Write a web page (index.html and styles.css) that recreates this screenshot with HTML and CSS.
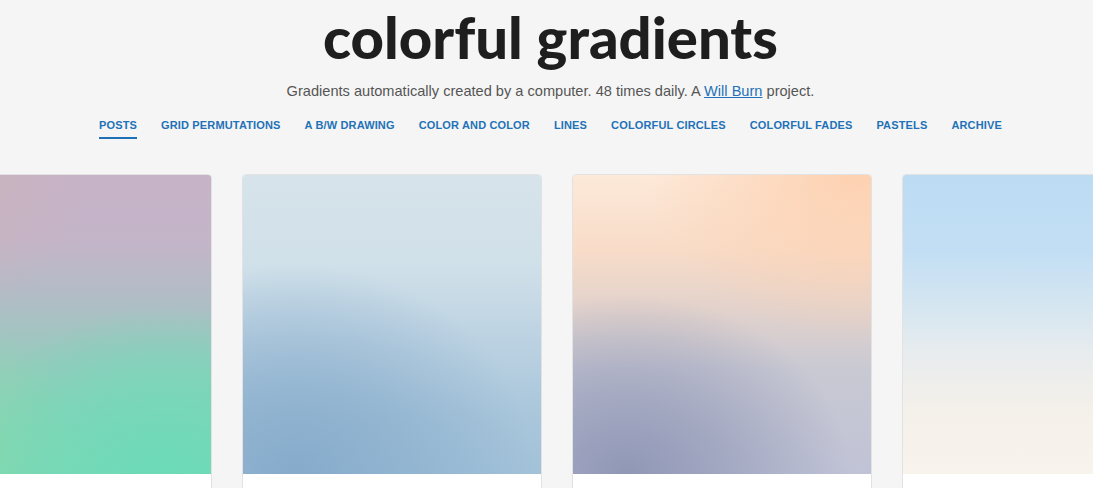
FILE: index.html
```html
<!DOCTYPE html>
<html lang="en">
<head>
<meta charset="utf-8">
<title>colorful gradients</title>
<link rel="stylesheet" href="styles.css">
</head>
<body>
<header class="masthead">
  <h1 class="title">colorful gradients</h1>
  <p class="tagline">Gradients automatically created by a computer. 48 times daily. A <a href="#">Will Burn</a> project.</p>
  <nav class="nav">
    <a class="nav-item active" href="#">POSTS</a>
    <a class="nav-item" href="#">GRID PERMUTATIONS</a>
    <a class="nav-item" href="#">A B/W DRAWING</a>
    <a class="nav-item" href="#">COLOR AND COLOR</a>
    <a class="nav-item" href="#">LINES</a>
    <a class="nav-item" href="#">COLORFUL CIRCLES</a>
    <a class="nav-item" href="#">COLORFUL FADES</a>
    <a class="nav-item" href="#">PASTELS</a>
    <a class="nav-item" href="#">ARCHIVE</a>
  </nav>
</header>
<main class="feed">
  <div class="track">
    <article class="card"><div class="art art-mint"></div><div class="card-body"></div></article>
    <article class="card"><div class="art art-sky"></div><div class="card-body"></div></article>
    <article class="card"><div class="art art-peach"></div><div class="card-body"></div></article>
    <article class="card"><div class="art art-dawn"></div><div class="card-body"></div></article>
  </div>
</main>
</body>
</html>
```
FILE: styles.css
```css
html, body {
  margin: 0;
  padding: 0;
  background: #f5f5f5;
  overflow: hidden;
}
body {
  font-family: "Liberation Sans", Arial, sans-serif;
  color: #222;
}
.masthead {
  display: flex;
  flex-direction: column;
  align-items: center;
  padding-top: 4px;
  padding-left: 8px;
}
.title {
  margin: 0;
  font-family: Lato, "Noto Sans", sans-serif;
  font-weight: 900;
  font-size: 58px;
  line-height: 66px;
  color: #1e1e1e;
  letter-spacing: 0;
}
.tagline {
  margin: 12px 0 0;
  font-size: 14.6px;
  line-height: 18px;
  color: #555;
}
.tagline a {
  color: #1f72b8;
  text-decoration: underline;
}
.nav {
  display: flex;
  gap: 24px;
  margin-top: 14px;
}
.nav-item {
  font-size: 11px;
  font-weight: 700;
  color: #1f72b8;
  text-decoration: none;
  letter-spacing: 0.15px;
  padding: 5px 0 6px;
  border-bottom: 2px solid transparent;
}
.nav-item.active {
  border-bottom-color: #1f72b8;
}
.feed {
  margin-top: 35px;
}
.track {
  display: flex;
  gap: 30px;
  margin-left: -88px;
}
.card {
  box-sizing: border-box;
  flex: 0 0 300px;
  background: #fff;
  border: 1px solid #e2e2e2;
  border-radius: 4px;
  overflow: hidden;
}
.art {
  height: 299px;
}
.card-body {
  height: 40px;
}
.art-mint {
  background:
    radial-gradient(ellipse 90% 70% at 85% 100%, #6ddbb8 0%, rgba(112,218,184,0.6) 45%, rgba(112,218,184,0) 80%),
    radial-gradient(ellipse 70% 60% at 5% 95%, #8ad9a8 0%, rgba(138,217,168,0) 80%),
    radial-gradient(ellipse 60% 50% at 0% 0%, #c9b2b8 0%, rgba(201,178,184,0) 100%),
    linear-gradient(180deg, #c7b3c8 0%, #c4b5c9 22%, #b2bcc6 40%, #9ac8be 60%, #80d6b6 100%);
}
.art-sky {
  background:
    radial-gradient(ellipse 80% 70% at 18% 100%, #86abcb 0%, rgba(134,171,203,0.55) 50%, rgba(134,171,203,0) 100%),
    linear-gradient(180deg, #d6e3eb 0%, #d0e0e9 30%, #bcd2e2 55%, #a9c6db 80%, #a2c2d9 100%);
}
.art-peach {
  background:
    radial-gradient(ellipse 75% 60% at 18% 100%, #9097b6 0%, rgba(144,151,182,0.6) 45%, rgba(144,151,182,0) 100%),
    radial-gradient(ellipse 70% 55% at 95% 0%, #fdd1b1 0%, rgba(253,209,177,0) 100%),
    linear-gradient(180deg, #fde9d9 0%, #f8dcc8 25%, #e2d2cc 45%, #c9c9d3 65%, #c0c3d6 100%);
}
.art-dawn {
  background:
    linear-gradient(180deg, #bcdcf4 0%, #c2def4 25%, #d6e6f0 45%, #e8ecee 60%, #f4f0ea 78%, #f8f3ec 100%);
}
```
